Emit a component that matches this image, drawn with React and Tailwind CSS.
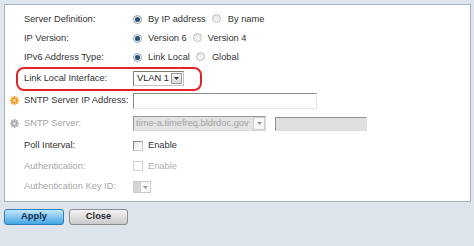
import React from "react";

const font = { fontFamily: '"Liberation Sans", Arial, sans-serif' };

function Radio({ on }) {
  return on ? (
    <span className="inline-flex w-[9px] h-[9px] rounded-full border border-[#9aa3ab] bg-[#eef1f4] items-center justify-center">
      <span className="w-[5px] h-[5px] rounded-full bg-[#2a4f7a]" />
    </span>
  ) : (
    <span className="inline-block w-[9px] h-[9px] rounded-full border border-[#b9bec3] bg-gradient-to-b from-[#e4e6e8] to-[#f7f8f9]" />
  );
}

function Gear({ color }) {
  return (
    <svg width="9" height="9" viewBox="0 0 10 10">
      <g fill={color}>
        <circle cx="5" cy="5" r="3.2" />
        <rect x="4.1" y="0" width="1.8" height="10" />
        <rect x="0" y="4.1" width="10" height="1.8" />
        <rect x="4.1" y="0" width="1.8" height="10" transform="rotate(45 5 5)" />
        <rect x="4.1" y="0" width="1.8" height="10" transform="rotate(-45 5 5)" />
      </g>
      <circle cx="5" cy="5" r="1.3" fill="#ffffff" />
    </svg>
  );
}

function Arrow({ color = "#333" }) {
  return (
    <svg width="5" height="3" viewBox="0 0 5 3">
      <path d="M0 0 L5 0 L2.5 3 Z" fill={color} />
    </svg>
  );
}

function Checkbox({ disabled }) {
  return (
    <span
      className={
        "inline-block w-[10px] h-[10px] border " +
        (disabled
          ? "border-[#cfd2d5] bg-white"
          : "border-t-[#8d8d8d] border-l-[#8d8d8d] border-r-[#c9c9c9] border-b-[#c9c9c9] bg-gradient-to-br from-[#e9e9e9] to-white")
      }
    />
  );
}

function Label({ children, grey }) {
  return (
    <div className={"w-[109px] shrink-0 " + (grey ? "text-[#a6a6a6]" : "text-[#333]")}>
      {children}
    </div>
  );
}

export default function App() {
  return (
    <div
      className="w-[474px] h-[246px] bg-[#dde4eb] pt-[4px] pl-[4px] text-[9.3px] leading-none overflow-hidden"
      style={font}
    >
      <div className="w-[467px] h-[198px] bg-white border border-[#a9b3bc] pt-[5px] flex flex-col">
        <div className="h-[19px] flex items-center pl-[19px]">
          <Label>Server Definition:</Label>
          <div className="flex items-center text-[#333]">
            <Radio on />
            <span className="ml-[6px]">By IP address</span>
            <span className="ml-[6px]"><Radio /></span>
            <span className="ml-[7px]">By name</span>
          </div>
        </div>
        <div className="h-[19px] flex items-center pl-[19px]">
          <Label>IP Version:</Label>
          <div className="flex items-center text-[#333]">
            <Radio on />
            <span className="ml-[6px]">Version 6</span>
            <span className="ml-[6px]"><Radio /></span>
            <span className="ml-[6px]">Version 4</span>
          </div>
        </div>
        <div className="h-[20px] flex items-center pl-[19px]">
          <Label>IPv6 Address Type:</Label>
          <div className="flex items-center text-[#333]">
            <Radio on />
            <span className="ml-[6px]">Link Local</span>
            <span className="ml-[6px]"><Radio /></span>
            <span className="ml-[7px]">Global</span>
          </div>
        </div>
        <div className="h-[21px] flex items-center pl-[11px]">
          <div className="w-[186px] h-[24px] border-2 border-[#e0242c] rounded-[8px] flex items-center pl-[6px]">
            <Label>Link Local Interface:</Label>
            <div className="h-[15px] w-[51px] flex items-center border border-t-[#7d7d7d] border-l-[#7d7d7d] border-r-[#c2c2c2] border-b-[#c2c2c2] bg-white">
              <span className="ml-[3px] text-[#222] flex-1 whitespace-nowrap">VLAN 1</span>
              <span className="w-[11px] h-[11px] mr-[1px] border border-[#9c9c9c] bg-gradient-to-b from-[#f4f4f4] to-[#d9d9d9] flex items-center justify-center">
                <Arrow />
              </span>
            </div>
          </div>
        </div>
        <div className="h-[23px] flex items-center pl-[5px]">
          <span className="w-[9px] flex"><Gear color="#f39a1e" /></span>
          <span className="w-[5px]" />
          <Label>SNTP Server IP Address:</Label>
          <div className="w-[184px] h-[16px] border border-t-[#8a8a8a] border-l-[#8a8a8a] border-r-[#e6e6e6] border-b-[#e6e6e6] bg-white" />
        </div>
        <div className="h-[23px] flex items-center pl-[5px]">
          <span className="w-[9px] flex"><Gear color="#a9a9a9" /></span>
          <span className="w-[5px]" />
          <Label grey>SNTP Server:</Label>
          <div className="w-[133px] h-[15px] flex items-center border border-t-[#9a9a9a] border-l-[#9a9a9a] border-r-[#d8d8d8] border-b-[#d8d8d8] bg-[#e3e3e3]">
            <span className="ml-[2px] flex-1 text-[#a2a2a2] whitespace-nowrap overflow-hidden">time-a.timefreq.bldrdoc.gov</span>
            <span className="w-[12px] h-[13px] border border-[#cfcfcf] bg-[#f7f7f7] flex items-center justify-center">
              <Arrow color="#999" />
            </span>
          </div>
          <div className="ml-[9px] w-[92px] h-[14px] border border-t-[#8f8f8f] border-l-[#8f8f8f] border-r-[#dedede] border-b-[#dedede] bg-[#e0e0e0]" />
        </div>
        <div className="h-[21px] flex items-center pl-[19px]">
          <Label>Poll Interval:</Label>
          <Checkbox />
          <span className="ml-[5px] text-[#333]">Enable</span>
        </div>
        <div className="h-[20.5px] flex items-center pl-[19px]">
          <Label grey>Authentication:</Label>
          <Checkbox disabled />
          <span className="ml-[5px] text-[#b0b0b0]">Enable</span>
        </div>
        <div className="h-[21px] flex items-center pl-[19px]">
          <Label grey>Authentication Key ID:</Label>
          <div className="w-[18px] h-[12px] flex items-center border border-[#c8c8c8] bg-[#d6d6d6]">
            <span className="flex-1" />
            <span className="w-[10px] h-[10px] bg-[#f8f8f8] border-l border-[#d0d0d0] flex items-center justify-center">
              <Arrow color="#999" />
            </span>
          </div>
        </div>
      </div>
      <div className="flex mt-[7px] gap-[5px]">
        <button className="w-[60px] h-[16px] rounded-[3px] border border-[#2d7fb8] bg-gradient-to-b from-[#bfe6fb] to-[#3fa6e4] text-[#0f2a4a] font-bold flex items-center justify-center">
          Apply
        </button>
        <button className="w-[59px] h-[16px] rounded-[3px] border border-[#8c8c8c] bg-gradient-to-b from-[#f4f4f4] to-[#c9c9c9] text-[#2a2a2a] font-bold flex items-center justify-center">
          Close
        </button>
      </div>
    </div>
  );
}
